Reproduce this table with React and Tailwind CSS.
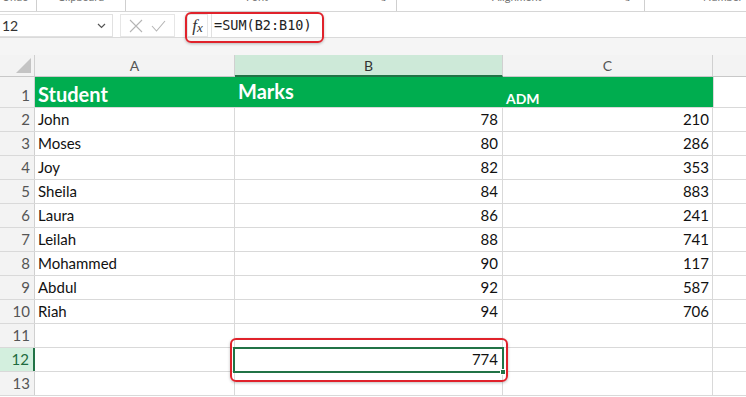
import React from "react";

const rows = [
  ["John", 78, 210],
  ["Moses", 80, 286],
  ["Joy", 82, 353],
  ["Sheila", 84, 883],
  ["Laura", 86, 241],
  ["Leilah", 88, 741],
  ["Mohammed", 90, 117],
  ["Abdul", 92, 587],
  ["Riah", 94, 706],
];

const cellFont = { fontFamily: "Lato, 'Open Sans', sans-serif" };

function RibbonLabels() {
  return (
    <div className="relative h-[12px] overflow-hidden bg-white border-b border-[#d6d6d6] text-[11px] text-[#777]" style={cellFont}>
      <div className="flex h-full">
        <div className="w-[37px] border-r border-[#cfcfcf] -mt-[11px] pl-[2px]">Undo</div>
        <div className="w-[89px] border-r border-[#cfcfcf] -mt-[11px] text-center">Clipboard</div>
        <div className="w-[271px] border-r border-[#cfcfcf] -mt-[11px] flex justify-between pl-[120px] pr-[10px]">
          <span>Font</span>
          <span className="text-[9px] mt-[2px]">↘</span>
        </div>
        <div className="w-[248px] border-r border-[#cfcfcf] -mt-[11px] flex justify-between pl-[95px] pr-[14px]">
          <span>Alignment</span>
          <span className="text-[9px] mt-[2px]">↘</span>
        </div>
        <div className="flex-1 -mt-[11px] pl-[58px]">Number</div>
      </div>
    </div>
  );
}

function FormulaBar() {
  return (
    <div className="relative h-[26px] bg-white border-b border-[#dadada] flex items-stretch pt-[2px]">
      <div className="w-[113px] border border-[#e1e1e1] border-l-0 flex items-center justify-between pl-[2px] pr-[6px] text-[14px] text-[#333]" style={cellFont}>
        <span>12</span>
        <svg width="9" height="6" viewBox="0 0 9 6" fill="none" stroke="#555" strokeWidth="1.2">
          <path d="M1 1l3.5 3.5L8 1" />
        </svg>
      </div>
      <div className="w-[7px]" />
      <div className="w-[55px] border border-[#e6e6e6] flex items-center justify-around px-[4px]">
        <svg width="14" height="14" viewBox="0 0 14 14" fill="none" stroke="#b5b5b5" strokeWidth="1.1">
          <path d="M1 1l12 12M13 1L1 13" />
        </svg>
        <svg width="15" height="12" viewBox="0 0 15 12" fill="none" stroke="#b5b5b5" strokeWidth="1.1">
          <path d="M1 6l4.5 5L14 1" />
        </svg>
      </div>
      <div className="w-[12px]" />
      <div className="w-[21px] border border-[#e6e6e6] flex items-center justify-center text-[17px] italic text-[#333] leading-none" style={{ fontFamily: "'Liberation Serif', serif" }}>
        f<span className="text-[13px] mt-[4px]">x</span>
      </div>
      <div className="flex-1 border-l border-[#e1e1e1] ml-[3px] flex items-center pl-[2px] text-[13.5px] text-[#222]" style={{ fontFamily: "'DejaVu Sans Mono', monospace" }}>
        =SUM(B2:B10)
      </div>
      <div className="absolute left-[185px] top-[0px] w-[139px] h-[31px] rounded-[6px] border-2 border-[#e0222b] shadow-[0_1px_3px_rgba(0,0,0,0.25)] pointer-events-none" />
    </div>
  );
}

function ColumnHeaders() {
  return (
    <div className="flex h-[22px] bg-[#f3f3f3] border-b border-[#c8c8c8] text-[14px] text-[#555]" style={cellFont}>
      <div className="w-[35px] border-r border-[#d0d0d0] relative">
        <svg className="absolute right-[3px] bottom-[3px]" width="15" height="15" viewBox="0 0 15 15">
          <path d="M15 0V15H0Z" fill="#c4c4c4" />
        </svg>
      </div>
      <div className="w-[200px] border-r border-[#d0d0d0] flex items-center justify-center">A</div>
      <div className="w-[268px] border-r border-[#d0d0d0] bg-[#cde9d8] border-b-2 border-b-[#217346] -mb-px flex items-center justify-center text-[#333]">B</div>
      <div className="w-[210px] border-r border-[#d0d0d0] flex items-center justify-center">C</div>
      <div className="flex-1" />
    </div>
  );
}

function RowHead({ n, active }) {
  return (
    <div
      className={
        "w-[35px] shrink-0 flex items-end justify-end pr-[4px] pb-[1px] text-[15px] " +
        (active
          ? "bg-[#d3efde] text-[#1e6b40] border-r-2 border-[#217346]"
          : "bg-[#f3f3f3] text-[#555] border-r border-[#d0d0d0]")
      }
    >
      {n}
    </div>
  );
}

export default function App() {
  return (
    <div className="w-[746px] h-[397px] overflow-hidden bg-white">
      <RibbonLabels />
      <FormulaBar />
      <div className="h-[17px] bg-[#f5f5f5]" />
      <ColumnHeaders />
      <div className="relative text-[15px] text-[#111]" style={cellFont}>
        {/* header row */}
        <div className="flex h-[31px] border-b border-[#d9d9d9]">
          <RowHead n={1} />
          <div className="w-[678px] bg-[#00ad4f] flex text-white font-bold">
            <div className="w-[200px] flex items-end pl-[3px] pb-[3px] text-[20px] leading-none">Student</div>
            <div className="w-[268px] flex items-end pl-[3px] pb-[6px] text-[20px] leading-none">Marks</div>
            <div className="w-[210px] flex items-end pl-[3px] pb-[1px] text-[14px] leading-none">ADM</div>
          </div>
          <div className="flex-1 border-l border-[#d9d9d9]" />
        </div>
        {rows.map(([name, mark, adm], i) => (
          <div key={name} className="flex h-[24px] border-b border-[#d9d9d9]">
            <RowHead n={i + 2} />
            <div className="w-[200px] border-r border-[#d9d9d9] flex items-end pl-[3px] pb-[1px]">{name}</div>
            <div className="w-[268px] border-r border-[#d9d9d9] flex items-end justify-end pr-[4px] pb-[1px]">{mark}</div>
            <div className="w-[210px] border-r border-[#d9d9d9] flex items-end justify-end pr-[3px] pb-[1px]">{adm}</div>
            <div className="flex-1" />
          </div>
        ))}
        {[11, 12, 13].map((n) => (
          <div key={n} className="flex h-[24px] border-b border-[#d9d9d9]">
            <RowHead n={n} active={n === 12} />
            <div className="w-[200px] border-r border-[#d9d9d9]" />
            <div className="w-[268px] border-r border-[#d9d9d9] flex items-end justify-end pr-[4px] pb-[1px]">
              {n === 12 ? "774" : ""}
            </div>
            <div className="w-[210px] border-r border-[#d9d9d9]" />
            <div className="flex-1" />
          </div>
        ))}
        {/* active cell outline and fill handle */}
        <div className="absolute left-[233px] top-[270px] w-[271px] h-[26px] border-2 border-[#217346] pointer-events-none">
          <div className="absolute -right-[4px] -bottom-[4px] w-[6px] h-[6px] bg-[#217346] border border-white" />
        </div>
        {/* callout around the total */}
        <div className="absolute left-[230px] top-[261px] w-[278px] h-[44px] rounded-[6px] border-2 border-[#e0222b] shadow-[0_1px_3px_rgba(0,0,0,0.25)] pointer-events-none" />
      </div>
    </div>
  );
}
